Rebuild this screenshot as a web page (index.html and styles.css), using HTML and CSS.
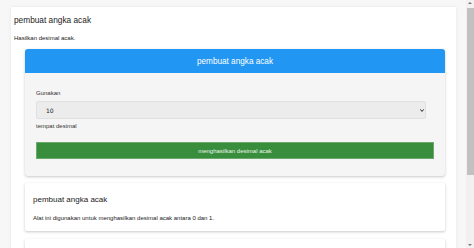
FILE: index.html
```html
<!DOCTYPE html>
<html lang="id">
<head>
<meta charset="utf-8">
<title>pembuat angka acak</title>
<link rel="stylesheet" href="styles.css">
</head>
<body>
<main class="page">
  <h1 class="page-title">pembuat angka acak</h1>
  <p class="lead">Hasilkan desimal acak.</p>

  <section class="tool-card">
    <header class="tool-head">pembuat angka acak</header>
    <div class="tool-body">
      <label class="field-label" for="places">Gunakan</label>
      <div class="select-wrap">
        <select id="places" class="select">
          <option>10</option>
        </select>
        <svg class="select-arrow" width="4" height="3" viewBox="0 0 4 3"><path d="M0.3 0.4 L2 2.4 L3.7 0.4" fill="none" stroke="#222" stroke-width="1"/></svg>
      </div>
      <div class="field-label after">tempat desimal</div>
      <button class="btn" type="button">menghasilkan desimal acak</button>
    </div>
  </section>

  <section class="info-card">
    <h2 class="info-title">pembuat angka acak</h2>
    <p class="info-text">Alat ini digunakan untuk menghasilkan desimal acak antara 0 dan 1.</p>
  </section>

  <section class="info-card tall">
    <h2 class="info-title">cara menggunakan</h2>
    <p class="info-text">Pilih jumlah tempat desimal, lalu klik tombol untuk menghasilkan angka.</p>
  </section>
</main>
<div class="scrollbar" aria-hidden="true">
  <span class="sb-arrow up"></span>
  <span class="sb-thumb"></span>
  <span class="sb-arrow down"></span>
</div>
</body>
</html>
```

FILE: styles.css
```css
body {
  margin: 0;
  padding: 7px 0 40px 0;
  background: #f7f7f7;
  font-family: "Liberation Sans", Arial, sans-serif;
  color: #222;
}
.page {
  margin: 0 18px 0 11px;
  padding: 7px 0 30px 3px;
  background: #fff;
  box-shadow: 0 0 3px rgba(0, 0, 0, 0.08);
}
.page-title {
  margin: 0;
  font-size: 8.3px;
  line-height: 12px;
  font-weight: normal;
}
.lead {
  margin: 8px 0 0 0;
  font-size: 6px;
  line-height: 8px;
}
.tool-card {
  margin: 7px 11px 0 11px;
  border-radius: 3px;
  background: #f5f5f5;
  box-shadow: 0 1px 3px rgba(0, 0, 0, 0.22);
}
.tool-head {
  height: 24px;
  display: flex;
  align-items: center;
  justify-content: center;
  background: #2196f3;
  color: #fff;
  font-size: 8.2px;
  border-radius: 3px 3px 0 0;
}
.tool-body {
  padding: 16px 11px 17px 11px;
  display: flex;
  flex-direction: column;
}
.field-label {
  font-size: 6px;
  line-height: 8px;
  color: #333;
}
.field-label.after {
  margin-top: 3px;
}
.select-wrap {
  position: relative;
  margin: 4px 8px 0 0;
}
.select {
  appearance: none;
  -webkit-appearance: none;
  display: block;
  width: 100%;
  height: 18px;
  margin: 0;
  padding: 0 0 0 9px;
  border: 1px solid #e0e0e0;
  border-radius: 2px;
  background: #ececec;
  font-family: "DejaVu Sans", sans-serif;
  font-size: 6px;
  color: #222;
}
.select-arrow {
  position: absolute;
  right: 2px;
  top: 8px;
}
.btn {
  margin-top: 12px;
  height: 17px;
  border: 1px solid #6aa86c;
  background: #388e3c;
  color: #e8f5e9;
  font-family: "Liberation Sans", Arial, sans-serif;
  font-size: 6px;
  padding: 0;
}
.info-card {
  margin: 7px 11px 0 11px;
  padding: 12px 8px 9px 8px;
  background: #fff;
  border-radius: 2px;
  box-shadow: 0 1px 3px rgba(0, 0, 0, 0.22);
}
.info-card + .info-card {
  margin-top: 8px;
}
.info-card.tall {
  padding-top: 22px;
}
.info-title {
  margin: 0;
  font-size: 8px;
  line-height: 10px;
  font-weight: normal;
}
.info-text {
  margin: 9px 0 0 0;
  font-size: 6px;
  line-height: 8px;
}
.scrollbar {
  position: fixed;
  top: 0;
  right: 0;
  bottom: 0;
  width: 8px;
  background: #f1f1f1;
  display: flex;
  flex-direction: column;
  align-items: center;
}
.sb-arrow {
  width: 0;
  height: 0;
  border-left: 2px solid transparent;
  border-right: 2px solid transparent;
  margin: 2px 0;
}
.sb-arrow.up {
  border-bottom: 2px solid #777;
}
.sb-arrow.down {
  margin-top: auto;
  border-top: 2px solid #777;
}
.sb-thumb {
  width: 7px;
  height: 167px;
  margin-top: 2px;
  background: #c1c1c1;
}
```
